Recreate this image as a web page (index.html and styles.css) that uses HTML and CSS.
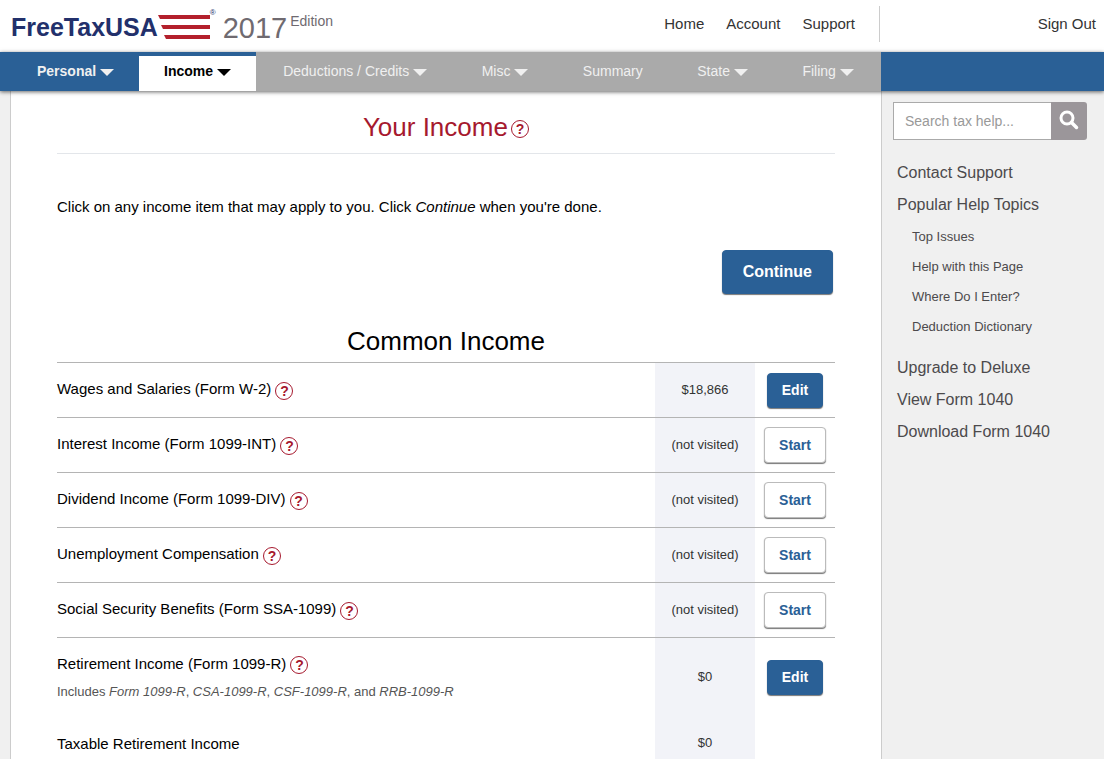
FILE: index.html
```html
<!DOCTYPE html>
<html lang="en">
  <head>
    <meta charset="UTF-8" />
    <meta name="viewport" content="width=device-width, initial-scale=1.0" />
    <title>FreeTaxUSA 2017 - Your Income</title>
    <link rel="stylesheet" href="styles.css">
  </head>
  <body>
    <header class="header">
      <div class="header-main">
        <a class="logo" href="#">
          <span class="logo-text">FreeTaxUSA</span>
          <svg class="logo-flag" width="52" height="26" viewBox="0 0 52 26">
            <path d="M0 1h52v4H2z M3 11h49v4H5z M6 21h46v4H8z" fill="#b3202c" />
          </svg>
          <sup class="logo-mark">®</sup>
        </a>
        <span class="year">2017</span>
        <span class="edition">Edition</span>
        <nav class="links">
          <a href="#">Home</a>
          <a href="#">Account</a>
          <a href="#">Support</a>
        </nav>
      </div>
      <div class="header-side">
        <a href="#">Sign Out</a>
      </div>
    </header>

    <nav class="tabs">
      <div class="tabs-main">
        <a class="tab done" href="#">Personal <i class="caret"></i></a>
        <a class="tab active" href="#">Income <i class="caret"></i></a>
        <a class="tab" href="#">Deductions / Credits <i class="caret"></i></a>
        <a class="tab" href="#">Misc <i class="caret"></i></a>
        <a class="tab" href="#">Summary</a>
        <a class="tab" href="#">State <i class="caret"></i></a>
        <a class="tab" href="#">Filing <i class="caret"></i></a>
      </div>
    </nav>

    <div class="page">
      <main class="content">
        <h1>Your Income <a class="help" href="#">?</a></h1>
        <p class="intro">Click on any income item that may apply to you. Click <em>Continue</em> when you're done.</p>
        <div class="actions">
          <button class="btn btn-large" type="button">Continue</button>
        </div>

        <h2>Common Income</h2>
        <table class="items">
          <tr>
            <td>Wages and Salaries (Form W-2) <a class="help" href="#">?</a></td>
            <td class="amount">$18,866</td>
            <td class="action"><button class="btn" type="button">Edit</button></td>
          </tr>
          <tr>
            <td>Interest Income (Form 1099-INT) <a class="help" href="#">?</a></td>
            <td class="amount">(not visited)</td>
            <td class="action"><button class="btn btn-start" type="button">Start</button></td>
          </tr>
          <tr>
            <td>Dividend Income (Form 1099-DIV) <a class="help" href="#">?</a></td>
            <td class="amount">(not visited)</td>
            <td class="action"><button class="btn btn-start" type="button">Start</button></td>
          </tr>
          <tr>
            <td>Unemployment Compensation <a class="help" href="#">?</a></td>
            <td class="amount">(not visited)</td>
            <td class="action"><button class="btn btn-start" type="button">Start</button></td>
          </tr>
          <tr>
            <td>Social Security Benefits (Form SSA-1099) <a class="help" href="#">?</a></td>
            <td class="amount">(not visited)</td>
            <td class="action"><button class="btn btn-start" type="button">Start</button></td>
          </tr>
          <tr class="tall">
            <td>
              Retirement Income (Form 1099-R) <a class="help" href="#">?</a>
              <div class="note">Includes <em>Form 1099-R</em>, <em>CSA-1099-R</em>, <em>CSF-1099-R</em>, and <em>RRB-1099-R</em></div>
            </td>
            <td class="amount">$0</td>
            <td class="action"><button class="btn" type="button">Edit</button></td>
          </tr>
          <tr class="sub">
            <td>Taxable Retirement Income</td>
            <td class="amount">$0</td>
            <td class="action"></td>
          </tr>
        </table>
      </main>

      <aside class="sidebar">
        <form class="search">
          <input type="text" placeholder="Search tax help..." aria-label="Search tax help" />
          <button type="button" aria-label="Search">
            <svg width="20" height="20" viewBox="0 0 20 20" fill="none" stroke="#fff">
              <circle cx="8" cy="8" r="6" stroke-width="3" />
              <path d="M12.5 12.5L17.5 17.5" stroke-width="3.5" stroke-linecap="round" />
            </svg>
          </button>
        </form>
        <ul class="topics">
          <li><a href="#">Contact Support</a></li>
          <li>
            <a href="#">Popular Help Topics</a>
            <ul>
              <li><a href="#">Top Issues</a></li>
              <li><a href="#">Help with this Page</a></li>
              <li><a href="#">Where Do I Enter?</a></li>
              <li><a href="#">Deduction Dictionary</a></li>
            </ul>
          </li>
          <li><a href="#">Upgrade to Deluxe</a></li>
          <li><a href="#">View Form 1040</a></li>
          <li><a href="#">Download Form 1040</a></li>
        </ul>
      </aside>
    </div>
  </body>
</html>
```
FILE: styles.css
```css
* {
  box-sizing: border-box;
}
body {
  margin: 0;
  font-family: "Liberation Sans", Arial, sans-serif;
  font-size: 15px;
  color: #000;
  background-color: #f0f0f0;
}
a {
  color: inherit;
  text-decoration: none;
}
ul {
  margin: 0;
  padding: 0;
  list-style: none;
}

/* header */
.header {
  display: flex;
  height: 52px;
  background-color: #fff;
  color: #333;
}
.header-main {
  flex: 1;
  display: flex;
  height: 36px;
  margin-top: 6px;
  padding: 0 24px 0 11px;
  border-right: 1px solid #ccc;
}
.logo {
  display: flex;
  align-items: center;
  height: 42px;
  color: #22306b;
}
.logo-text {
  font-size: 25px;
  font-weight: bold;
}
.logo-mark {
  align-self: flex-start;
  font-size: 8px;
  line-height: 14px;
}
.year {
  margin-left: 7px;
  font-size: 29px;
  line-height: 44px;
  color: #6f6a70;
}
.edition {
  margin-left: 3px;
  font-size: 14px;
  line-height: 30px;
  color: #6f6a70;
}
.links {
  display: flex;
  gap: 22px;
  margin-left: auto;
  line-height: 36px;
}
.header-side {
  width: 224px;
  padding: 6px 8px 0 0;
  line-height: 36px;
  text-align: right;
}

/* tabs */
.tabs {
  position: relative;
  display: flex;
  padding-right: 223px;
  background-color: #2a6096;
  box-shadow: 0 1px 4px rgba(0, 0, 0, 0.6);
}
.tabs-main {
  flex: 1;
  display: flex;
  padding-left: 12px;
}
.tab {
  flex: 1 1 auto;
  height: 39px;
  font-size: 14px;
  line-height: 39px;
  text-align: center;
  white-space: nowrap;
  color: #f0f0f0;
  background-color: #aaa;
}
.tab.done,
.tab.active {
  flex: none;
  padding: 0 25px;
  font-weight: bold;
}
.tab.done {
  background-color: #2a6096;
}
.tab.active {
  color: #000;
  line-height: 31px;
  background-color: #fff;
  border-top: 4px solid #2a6096;
}
.caret {
  display: inline-block;
  border: 7px solid transparent;
  border-top-color: currentColor;
  border-bottom: 0;
}

/* page */
.page {
  display: flex;
}
.content {
  flex: 1;
  margin-left: 10px;
  padding: 18px 46px 0;
  background-color: #fff;
  border-left: 1px solid #ccc;
  border-right: 1px solid #ccc;
}
h1,
h2 {
  margin: 0;
  font-size: 26px;
  font-weight: normal;
  text-align: center;
}
h1 {
  padding-bottom: 8px;
  line-height: 36px;
  color: #a6192e;
  border-bottom: 1px solid #e3e6ea;
}
h1 .help {
  margin-left: -4px;
}
h2 {
  margin-top: 28px;
  padding-bottom: 2px;
  line-height: 38px;
}
.help {
  display: inline-block;
  width: 18px;
  height: 18px;
  font-size: 14px;
  font-weight: bold;
  line-height: 16px;
  text-align: center;
  vertical-align: middle;
  color: #a6192e;
  border: 1px solid #a6192e;
  border-radius: 50%;
}
.intro {
  margin: 43px 0 33px;
  line-height: 20px;
}
.actions {
  padding-right: 2px;
  text-align: right;
}
.btn {
  height: 35px;
  padding: 0 14px;
  font-family: inherit;
  font-size: 14px;
  font-weight: bold;
  color: #fff;
  background-color: #2a6096;
  border: 1px solid #2a6096;
  border-radius: 4px;
  box-shadow: 0 1px 1px #777;
  cursor: pointer;
}
.btn-large {
  height: 44px;
  padding: 0 20px;
  font-size: 16px;
}
.btn-start {
  height: 36px;
  color: #2a6096;
  background-color: #fff;
  border-color: #bbb;
}

/* income items */
.items {
  width: 100%;
  border-collapse: collapse;
}
.items td {
  height: 55px;
  padding: 0;
  border-top: 1px solid #b4b4b4;
}
.items .tall td {
  height: 79px;
}
.items .sub td {
  height: 54px;
  border-top: 0;
}
.items .amount {
  width: 100px;
  padding-bottom: 2px;
  font-size: 13px;
  text-align: center;
  color: #333;
  background-color: #f2f3f8;
  background-clip: padding-box;
}
.items .action {
  width: 80px;
  text-align: center;
}
.note {
  margin-top: 10px;
  font-size: 13px;
  color: #555;
}

/* sidebar */
.sidebar {
  width: 222px;
  padding: 11px 17px 0 11px;
  color: #4c4a4c;
}
.search {
  display: flex;
  height: 38px;
}
.search input {
  flex: 1;
  min-width: 0;
  padding: 0 11px;
  font-family: inherit;
  font-size: 14px;
  border: 1px solid #aaa;
  border-right: 0;
}
.search input::placeholder {
  color: #999;
}
.search button {
  width: 36px;
  padding: 0;
  background-color: #9b969a;
  border: 0;
  border-radius: 0 3px 3px 0;
}
.topics {
  padding: 17px 0 0 4px;
  font-size: 16px;
  line-height: 32px;
}
.topics ul {
  padding: 1px 0 10px 15px;
  font-size: 13px;
  line-height: 30px;
}
```
